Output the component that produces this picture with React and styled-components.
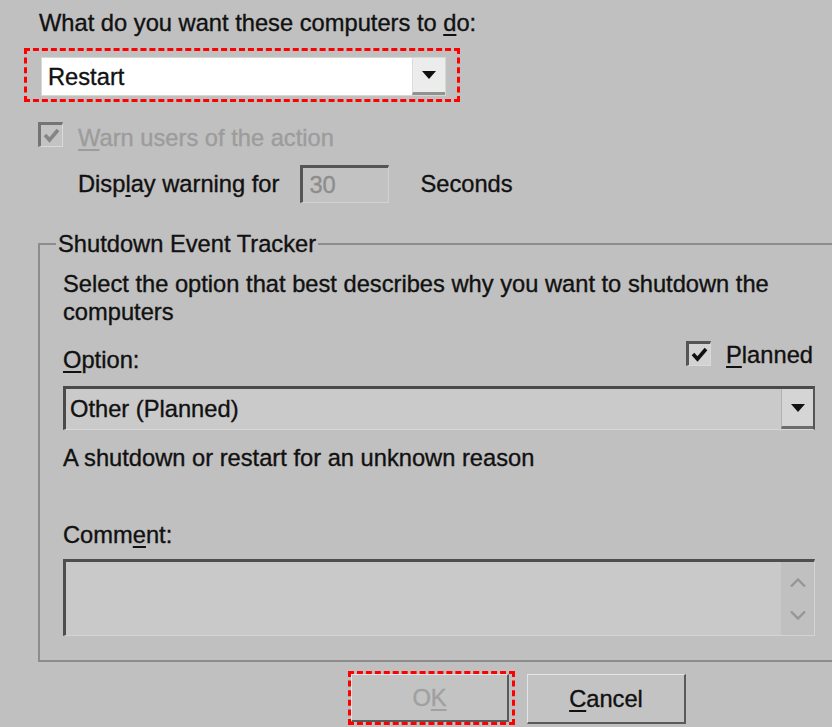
import React from 'react';
import styled, {createGlobalStyle, css} from 'styled-components';

const GlobalStyle = createGlobalStyle`
  html, body {
    margin: 0;
    padding: 0;
    background: #c0c0c0;
    overflow: hidden;
  }
  body {
    font-family: "Liberation Sans", Arial, sans-serif;
    font-size: 23.7px;
    line-height: 28px;
    color: #111111;
    -webkit-text-stroke: 0.35px currentColor;
  }
`;

const Page = styled.div`
  width: 832px;
  height: 727px;
  overflow: hidden;
  padding-top: 9px;
  box-sizing: border-box;
`;

const Key = styled.u`
  text-decoration-thickness: 2px;
  text-underline-offset: 3px;
`;

const Title = styled.div`
  margin-left: 39px;
  white-space: nowrap;
`;

const Highlight = styled.div`
  display: flex;
  width: max-content;
  border: 3px dashed #ff0000;
  padding: ${(p) => p.$pad || '0'};
  margin: ${(p) => p.$margin || '0'};
`;

const Select = styled.div`
  display: flex;
  box-sizing: border-box;
  width: ${(p) => p.$width}px;
  height: ${(p) => p.$height}px;

  ${(p) => p.$light ? css`
    background: #ffffff;
    border: 1px solid #d3dbd0;
  ` : css`
    background: #cacaca;
    border-top: 3px solid #4a4a4a;
    border-left: 3px solid #4a4a4a;
    border-right: 2px solid #555555;
    border-bottom: 1px solid #d8d8d8;
  `}
`;

const SelectText = styled.div`
  flex: 1;
  display: flex;
  align-items: center;
  padding-left: ${(p) => p.$light ? '6px' : '4px'};
  white-space: nowrap;
`;

const SelectButton = styled.div`
  width: ${(p) => p.$light ? '33px' : '32px'};
  display: flex;
  align-items: center;
  justify-content: center;
  box-sizing: border-box;
  background: ${(p) => p.$light ? '#ececec' : '#d5d5d5'};
  border-left: 1px solid ${(p) => p.$light ? '#dcdcdc' : '#b2b2b2'};
  border-bottom: 3px solid ${(p) => p.$light ? '#929292' : '#6c6c6c'};
`;

const Row = styled.div`
  display: flex;
  align-items: ${(p) => p.$align || 'center'};
  margin: ${(p) => p.$margin || '0'};
`;

const CheckBox = styled.span`
  width: 25px;
  height: 25px;
  flex: none;
  box-sizing: border-box;
  display: flex;
  align-items: center;
  justify-content: center;
  border-top: 3px solid ${(p) => p.$disabled ? '#747474' : '#555555'};
  border-left: 3px solid ${(p) => p.$disabled ? '#747474' : '#555555'};
  border-right: 1px solid #dadada;
  border-bottom: 1px solid #dadada;
  background: ${(p) => p.$disabled ? '#c3c3c3' : '#d3d3d3'};
  color: ${(p) => p.$disabled ? '#858585' : '#111111'};
`;

const Label = styled.span`
  white-space: nowrap;
  color: ${(p) => p.$disabled ? '#9c9c9c' : 'inherit'};
  margin: ${(p) => p.$margin || '0'};
`;

const NumberBox = styled.div`
  width: 89px;
  height: 38px;
  box-sizing: border-box;
  margin: 0 31px 0 21px;
  padding-left: 6px;
  display: flex;
  align-items: center;
  background: #c2c2c2;
  color: #8d8d8d;
  border-top: 3px solid #555555;
  border-left: 3px solid #555555;
  border-right: 1px solid #d2d2d2;
  border-bottom: 1px solid #d2d2d2;
`;

const Group = styled.fieldset`
  margin: 27px 0 0 38px;
  padding: 12px 23px 24px 23px;
  width: 752px;
  min-width: 0;
  border: 2px solid #8c8c8c;
`;

const Legend = styled.legend`
  padding: 0 2px;
  margin-left: -7px;
  white-space: nowrap;
`;

const Text = styled.div`
  margin-top: ${(p) => p.$top || 0}px;
`;

const SpreadRow = styled.div`
  display: flex;
  justify-content: space-between;
  align-items: flex-start;
  margin-top: 15px;
`;

const Memo = styled.div`
  display: flex;
  height: 77px;
  box-sizing: border-box;
  margin-top: 10px;
  background: #c9c9c9;
  border-top: 3px solid #4e4e4e;
  border-left: 3px solid #4e4e4e;
  border-right: 1px solid #d4d4d4;
  border-bottom: 1px solid #d4d4d4;
`;

const MemoArea = styled.div`
  flex: 1;
`;

const ScrollBar = styled.div`
  width: 33px;
  background: #c0c0c0;
  display: flex;
  flex-direction: column;
  align-items: center;
  justify-content: center;
  gap: 22px;
  color: #969696;
`;

const ButtonRow = styled.div`
  display: flex;
  align-items: flex-start;
  margin: 9px 0 0 348px;
`;

const Button = styled.div`
  width: ${(p) => p.$width}px;
  height: ${(p) => p.$height}px;
  box-sizing: border-box;
  margin: ${(p) => p.$margin || '0'};
  display: flex;
  align-items: center;
  justify-content: center;
  background: #c3c3c3;
  border-top: 1px solid #e4e4e4;
  border-left: 1px solid #e4e4e4;
  border-right: 2px solid #5a5a5a;
  border-bottom: 2px solid #5a5a5a;
  color: ${(p) => p.$disabled ? '#a0a0a0' : '#111111'};
`;

const Arrow = () => (
  <svg width="14" height="8" viewBox="0 0 14 8">
    <path d="M0 0 H14 L7 8 Z" fill="#111" />
  </svg>
);

const Tick = () => (
  <svg width="17" height="15" viewBox="0 0 17 15">
    <path d="M2 7 L6.5 12 L15 2" fill="none" stroke="currentColor" strokeWidth="3.6" />
  </svg>
);

const Chevron = ({down}) => (
  <svg width="16" height="10" viewBox="0 0 16 10">
    <path d={down ? 'M1 1.5 L8 8.5 L15 1.5' : 'M1 8.5 L8 1.5 L15 8.5'} fill="none" stroke="currentColor" strokeWidth="2.4" />
  </svg>
);

export default function App() {
  return (
    <Page>
      <GlobalStyle />
      <Title>What do you want these computers to <Key>d</Key>o:</Title>

      <Highlight $margin="11px 0 0 24px" $pad="6px 11px 3px 14px">
        <Select $light $width={405} $height={39}>
          <SelectText $light>Restart</SelectText>
          <SelectButton $light><Arrow /></SelectButton>
        </Select>
      </Highlight>

      <Row $align="flex-start" $margin="20px 0 0 38px">
        <CheckBox $disabled><Tick /></CheckBox>
        <Label $disabled $margin="2px 0 0 15px"><Key>W</Key>arn users of the action</Label>
      </Row>

      <Row $margin="13px 0 0 78px">
        <Label>Disp<Key>l</Key>ay warning for</Label>
        <NumberBox>30</NumberBox>
        <Label>Seconds</Label>
      </Row>

      <Group>
        <Legend>Shutdown Event Tracker</Legend>
        <Text>Select the option that best describes why you want to shutdown the computers</Text>

        <SpreadRow>
          <Label $margin="5px 0 0 0"><Key>O</Key>ption:</Label>
          <Row $align="flex-start" $margin="0 2px 0 0">
            <CheckBox><Tick /></CheckBox>
            <Label $margin="0 0 0 15px"><Key>P</Key>lanned</Label>
          </Row>
        </SpreadRow>

        <Text $top={12}>
          <Select $width={752} $height={44}>
            <SelectText>Other (Planned)</SelectText>
            <SelectButton><Arrow /></SelectButton>
          </Select>
        </Text>

        <Text $top={14}>A shutdown or restart for an unknown reason</Text>

        <Text $top={49}>Comm<Key>e</Key>nt:</Text>
        <Memo>
          <MemoArea />
          <ScrollBar>
            <Chevron />
            <Chevron down />
          </ScrollBar>
        </Memo>
      </Group>

      <ButtonRow>
        <Highlight $pad="0 3px 0 0">
          <Button $disabled $width={158} $height={48}>O<Key>K</Key></Button>
        </Highlight>
        <Button $width={159} $height={50} $margin="3px 0 0 12px"><Key>C</Key>ancel</Button>
      </ButtonRow>
    </Page>
  );
}
